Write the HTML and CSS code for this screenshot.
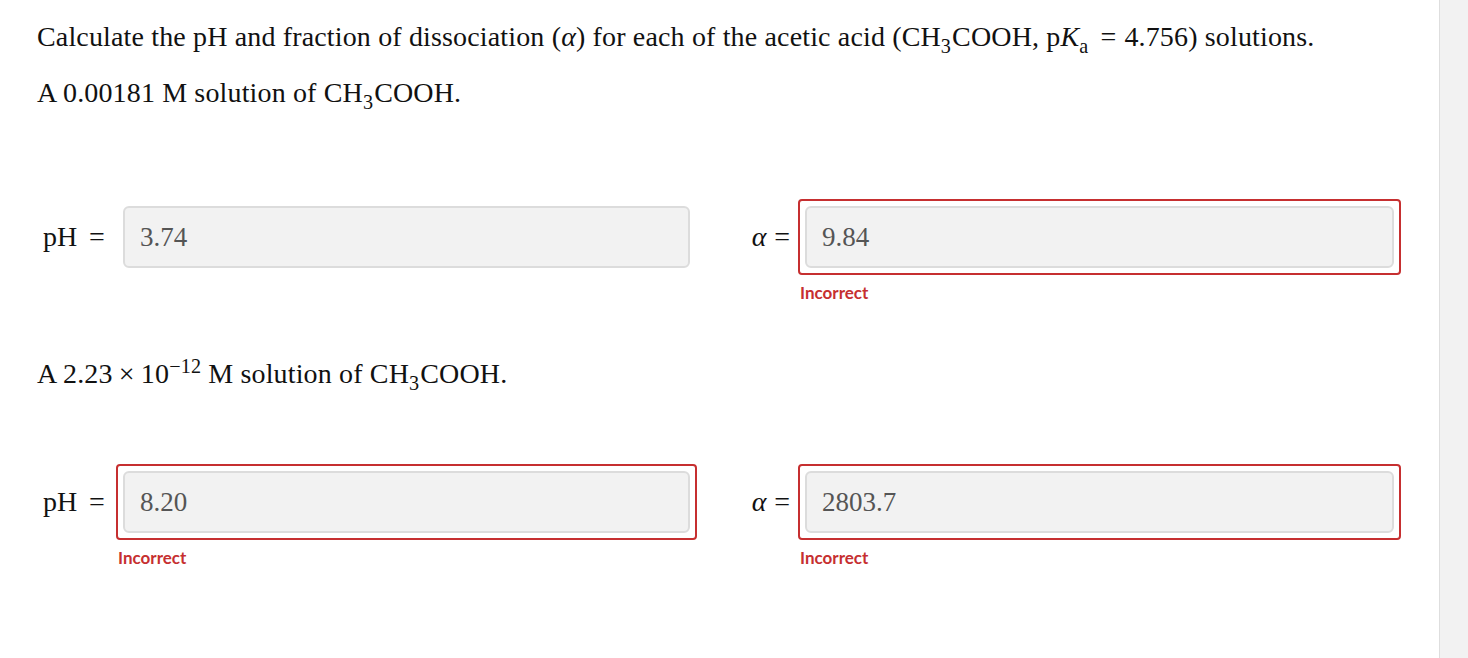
FILE: index.html
```html
<!DOCTYPE html>
<html>
<head>
<meta charset="utf-8">
<link rel="stylesheet" href="styles.css">
</head>
<body>
<div class="page">
  <main class="main">
    <p class="lead">Calculate the pH and fraction of dissociation <span class="paren">(<i class="var">α</i>)</span> for each of the acetic acid <span class="paren">(CH<sub>3</sub>COOH, p<i class="var">K</i><sub>a</sub><span class="eq eq-ka">=</span>4.756)</span> solutions.</p>
    <p class="part">A 0.00181 M solution of CH<sub>3</sub>COOH.</p>

    <div class="row row-first">
      <div class="cell cell-ph">
        <div class="label">pH<span class="eq">=</span></div>
        <div class="field">
          <div class="box"><div class="input">3.74</div></div>
        </div>
      </div>
      <div class="cell cell-alpha">
        <div class="label"><i class="var">α</i><span class="eq">=</span></div>
        <div class="field">
          <div class="box wrong"><div class="input">9.84</div></div>
          <div class="feedback">Incorrect</div>
        </div>
      </div>
    </div>

    <p class="part part-second">A 2.23<span class="times">×</span>10<sup>−12</sup> M solution of CH<sub>3</sub>COOH.</p>

    <div class="row row-second">
      <div class="cell cell-ph">
        <div class="label">pH<span class="eq">=</span></div>
        <div class="field">
          <div class="box wrong"><div class="input">8.20</div></div>
          <div class="feedback">Incorrect</div>
        </div>
      </div>
      <div class="cell cell-alpha">
        <div class="label"><i class="var">α</i><span class="eq">=</span></div>
        <div class="field">
          <div class="box wrong"><div class="input">2803.7</div></div>
          <div class="feedback">Incorrect</div>
        </div>
      </div>
    </div>
  </main>
  <aside class="sidebar"></aside>
</div>
</body>
</html>
```

FILE: styles.css
```css
html, body {
  margin: 0;
  padding: 0;
  background: #ffffff;
}

.page {
  display: flex;
  width: 1468px;
  height: 658px;
  overflow: hidden;
}

.main {
  flex: 1;
  padding: 22px 0 0 37px;
  font-family: "Liberation Serif", "Times New Roman", serif;
  font-size: 28px;
  color: #111111;
}

.sidebar {
  width: 28px;
  background: #f2f2f2;
  border-left: 1px solid #dedede;
}

p {
  margin: 0;
  line-height: 30px;
  letter-spacing: 0.15px;
}

.lead {
  white-space: nowrap;
}

.part {
  margin-top: 26px;
}

sub {
  font-size: 0.72em;
  vertical-align: -0.36em;
  line-height: 0;
  margin-right: 0.05em;
}

sup {
  font-size: 0.72em;
  vertical-align: 0.5em;
  line-height: 0;
}

.var {
  font-style: italic;
}

.eq {
  margin: 0 0.28em;
}

.eq-ka {
  margin-left: 0.4em;
}

.times {
  margin: 0 0.22em;
}

.row {
  display: flex;
  gap: 22px;
}

.row-first {
  margin-top: 91px;
}

.part-second {
  margin-top: 56px;
}

.row-second {
  margin-top: 75px;
}

.cell {
  display: flex;
  align-items: flex-start;
}

.label {
  width: 79px;
  height: 76px;
  display: flex;
  align-items: center;
  box-sizing: border-box;
  white-space: nowrap;
}

.cell-ph .label {
  justify-content: flex-start;
  padding-left: 6px;
}

.cell-ph .label .eq {
  margin-left: 0.42em;
}

.cell-alpha .label {
  justify-content: flex-end;
  padding-right: 8px;
}

.label .eq {
  margin-right: 0;
}

.cell-ph .field {
  width: 581px;
}

.cell-alpha .field {
  width: 603px;
}

.box {
  box-sizing: border-box;
  height: 76px;
  padding: 5px;
  border: 2px solid transparent;
  border-radius: 4px;
}

.box.wrong {
  border-color: #c62f30;
}

.input {
  box-sizing: border-box;
  height: 62px;
  border: 2px solid #dcdcdc;
  border-radius: 6px;
  background: #f2f2f2;
  padding-left: 15px;
  display: flex;
  align-items: center;
  color: #555555;
  font-size: 27px;
}

.feedback {
  margin-top: 8px;
  padding-left: 2px;
  font-family: Lato, "Open Sans", sans-serif;
  font-weight: 700;
  font-size: 17px;
  line-height: 20px;
  color: #c62f30;
}
```
